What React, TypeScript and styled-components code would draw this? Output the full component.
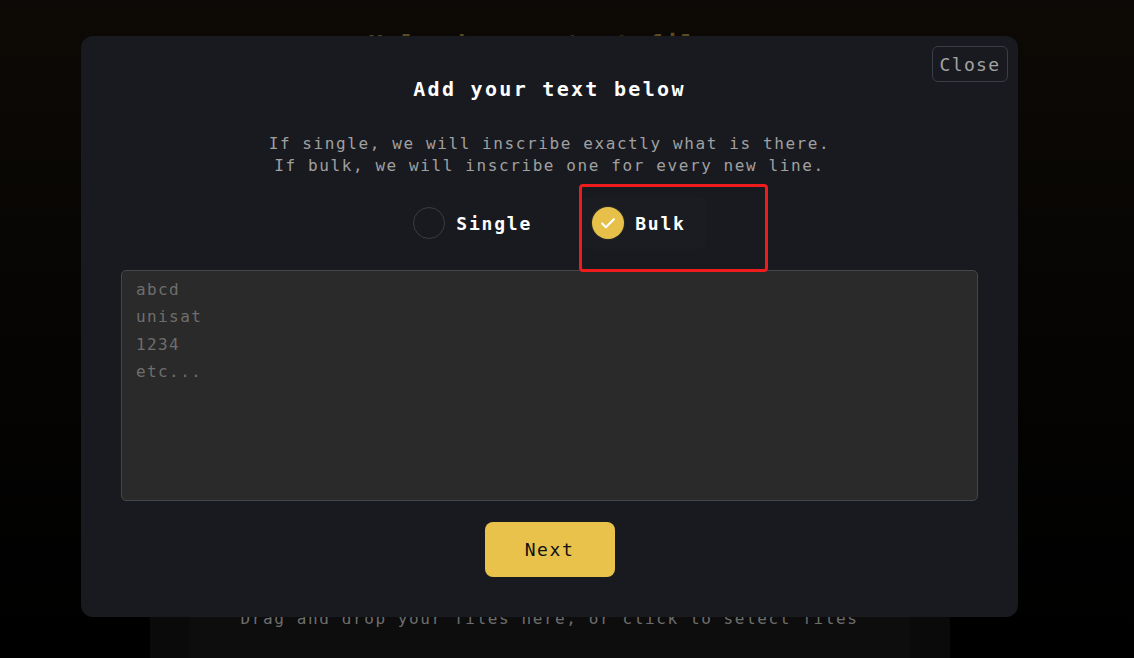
import React, { useState } from "react";
import styled, { createGlobalStyle, css } from "styled-components";

const GlobalStyle = createGlobalStyle`
  html, body {
    margin: 0;
    padding: 0;
  }
  body {
    background: #000;
    font-family: "DejaVu Sans Mono", "Liberation Mono", monospace;
  }
  * {
    box-sizing: border-box;
  }
`;

// the page behind the dialog (its centre sits left of the window centre)
const Page = styled.div`
  height: 658px;
  overflow: hidden;
  padding-right: 35px;
  background: linear-gradient(180deg, #1a130c 0%, #0a0806 60%, #000 100%);
  display: flex;
  flex-direction: column;
  align-items: center;
`;

const PageTitle = styled.h1`
  margin: 31px 0 0;
  font-size: 24px;
  line-height: 28px;
  font-weight: 700;
  letter-spacing: 2px;
  color: #b8963e;
`;

const DropPanel = styled.div`
  margin-top: 22px;
  width: 800px;
  padding: 0 40px;
  background: #141414;
`;

const DropZone = styled.div`
  height: 900px;
  padding-top: 528px;
  background: #1a1a1a;
  display: flex;
  justify-content: center;
  color: #d8d8d8;
  font-size: 16px;
  line-height: 20px;
  letter-spacing: 1.6px;
`;

const Overlay = styled.div`
  position: fixed;
  inset: 0;
  background: rgba(0, 0, 0, 0.5);
  display: flex;
  justify-content: center;
  align-items: flex-start;
  padding: 36px 35px 0 0;
`;

const Modal = styled.div`
  position: relative;
  width: 937px;
  background: #181a1f;
  border-radius: 12px;
  padding: 40px;
  display: flex;
  flex-direction: column;
  align-items: center;
`;

const CloseButton = styled.button`
  position: absolute;
  top: 10px;
  right: 10px;
  width: 76px;
  height: 36px;
  padding: 0;
  background: transparent;
  border: 1px solid #3b3e44;
  border-radius: 6px;
  color: #a3a3a3;
  font-family: inherit;
  font-size: 18px;
  letter-spacing: 1.4px;
  cursor: pointer;
`;

const Title = styled.h2`
  margin: 0;
  font-size: 20px;
  line-height: 26px;
  font-weight: 700;
  letter-spacing: 2.3px;
  color: #ffffff;
`;

const Hint = styled.p`
  margin: 31px 0 0;
  font-size: 16px;
  line-height: 22px;
  letter-spacing: 1.6px;
  color: #a0a0a0;
  text-align: center;
`;

const RadioRow = styled.div`
  margin-top: 20px;
  padding-left: 10px;
  display: flex;
  gap: 30px;
`;

const Option = styled.label<{ $active: boolean }>`
  position: relative;
  display: flex;
  align-items: center;
  gap: 11px;
  height: 52px;
  padding: 0 20px 0 10px;
  border-radius: 6px;
  cursor: pointer;
  color: #ffffff;
  font-size: 18px;
  font-weight: 700;
  letter-spacing: 1.8px;
  ${(props) =>
    props.$active &&
    css`
      background: #1a1c21;
    `}
`;

const Circle = styled.span<{ $checked: boolean }>`
  width: 32px;
  height: 32px;
  border-radius: 50%;
  display: flex;
  align-items: center;
  justify-content: center;
  ${(props) =>
    props.$checked
      ? css`
          background: #e7c04a;
          box-shadow: 0 0 0 1px #2a2a2a;
        `
      : css`
          border: 1.5px solid #3a3c41;
        `}
`;

const Annotation = styled.span`
  position: absolute;
  top: -13px;
  left: -3px;
  right: -62px;
  bottom: -23px;
  border: 3px solid #ee1c1c;
  border-radius: 4px;
  pointer-events: none;
`;

const TextArea = styled.textarea`
  margin-top: 21px;
  width: 100%;
  height: 231px;
  resize: none;
  background: #2a2a2a;
  border: 1px solid #45464a;
  border-radius: 5px;
  padding: 5px 14px;
  color: #ddd;
  font-family: inherit;
  font-size: 16px;
  line-height: 27.3px;
  letter-spacing: 1.4px;
  outline: none;

  &::placeholder {
    color: #6e6e6e;
  }
`;

const NextButton = styled.button`
  margin-top: 21px;
  width: 130px;
  height: 55px;
  border: none;
  border-radius: 8px;
  background: #e9c24b;
  color: #111;
  font-family: inherit;
  font-size: 18px;
  letter-spacing: 1.6px;
  cursor: pointer;
`;

const Check = () => (
  <svg width="20" height="20" viewBox="0 0 24 24" fill="none">
    <path
      d="M5 12.5l4.5 4.5L19 7.5"
      stroke="#ffffff"
      strokeWidth="2.6"
      strokeLinecap="round"
      strokeLinejoin="round"
    />
  </svg>
);

const App = () => {
  const [mode, setMode] = useState<"single" | "bulk">("bulk");

  return (
    <>
      <GlobalStyle />
      <Page>
        <PageTitle>Upload your text files</PageTitle>
        <DropPanel>
          <DropZone>Drag and drop your files here, or click to select files</DropZone>
        </DropPanel>
      </Page>
      <Overlay>
        <Modal>
          <CloseButton>Close</CloseButton>
          <Title>Add your text below</Title>
          <Hint>
            If single, we will inscribe exactly what is there.
            <br />
            If bulk, we will inscribe one for every new line.
          </Hint>
          <RadioRow>
            <Option $active={mode === "single"} onClick={() => setMode("single")}>
              <Circle $checked={mode === "single"}>{mode === "single" && <Check />}</Circle>
              Single
            </Option>
            <Option $active={mode === "bulk"} onClick={() => setMode("bulk")}>
              <Circle $checked={mode === "bulk"}>{mode === "bulk" && <Check />}</Circle>
              Bulk
              <Annotation />
            </Option>
          </RadioRow>
          <TextArea placeholder={"abcd\nunisat\n1234\netc..."} />
          <NextButton>Next</NextButton>
        </Modal>
      </Overlay>
    </>
  );
};

export default App;
